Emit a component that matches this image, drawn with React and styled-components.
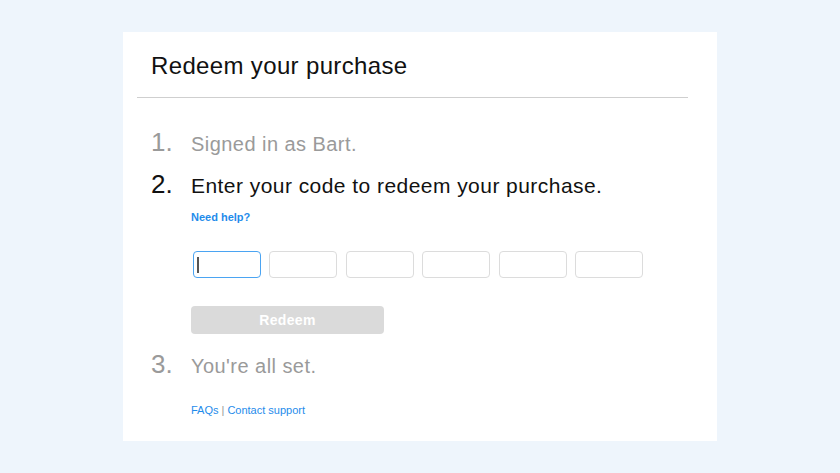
import React from 'react';
import styled, { createGlobalStyle } from 'styled-components';

const GlobalStyle = createGlobalStyle`
  html, body {
    margin: 0;
    padding: 0;
    background: #eef5fc;
  }
  body {
    font-family: "Liberation Sans", Arial, Helvetica, sans-serif;
  }
`;

const Page = styled.div`
  width: 840px;
  height: 473px;
  padding: 32px 0 0 123px;
  box-sizing: border-box;
`;

const Card = styled.div`
  width: 594px;
  height: 409px;
  background: #ffffff;
  padding: 22px 29px 0 14px;
  box-sizing: border-box;
  display: flex;
  flex-direction: column;
`;

const Title = styled.h1`
  margin: 0 0 19px 14px;
  font-size: 24px;
  line-height: 24px;
  font-weight: 400;
  letter-spacing: 0.35px;
  color: #111;
`;

const Divider = styled.hr`
  margin: 0;
  border: none;
  border-top: 1px solid #cfcfcf;
`;

const Steps = styled.div`
  display: flex;
  flex-direction: column;
  padding: 31px 0 0 14px;
`;

const Step = styled.div`
  display: flex;
  align-items: baseline;
  margin-top: ${({ gap }) => gap || 0}px;
  color: ${({ active }) => (active ? '#111' : '#9a9a9a')};
`;

const Num = styled.span`
  width: 40px;
  font-size: 26px;
  line-height: 1;
`;

const StepText = styled.span`
  font-size: ${({ large }) => (large ? 21 : 20)}px;
  letter-spacing: 0.45px;
  line-height: 1;
`;

const Body = styled.div`
  display: flex;
  flex-direction: column;
  align-items: flex-start;
  padding-left: 40px;
`;

const Link = styled.a`
  color: #1f8ceb;
  text-decoration: none;
  font-size: 11px;
  line-height: 11px;
  font-weight: ${({ bold }) => (bold ? 700 : 400)};
`;

const HelpLink = styled(Link)`
  margin-top: 15px;
`;

const CodeRow = styled.div`
  display: flex;
  gap: 8.4px;
  margin: 28px 0 0 2px;
`;

const CodeBox = styled.div`
  width: 68px;
  height: 27px;
  box-sizing: border-box;
  border: 1px solid ${({ focused }) => (focused ? '#4ba4f2' : '#dcdcdc')};
  border-radius: 4px;
  display: flex;
  align-items: center;
  padding-left: 3px;
`;

const Caret = styled.span`
  width: 2px;
  height: 16px;
  background: #555;
`;

const RedeemButton = styled.button`
  margin-top: 28px;
  width: 193px;
  height: 28px;
  border: none;
  border-radius: 4px;
  background: #dadada;
  color: #ffffff;
  font-family: "Liberation Sans", Arial, sans-serif;
  font-size: 14px;
  font-weight: 700;
  letter-spacing: 0.3px;
  padding: 0;
`;

const Footer = styled.div`
  margin: 28px 0 0 40px;
  font-size: 11px;
  line-height: 11px;
  color: #999;
`;

const Sep = styled.span`
  margin: 0 3px;
`;

export default function App() {
  return (
    <>
      <GlobalStyle />
      <Page>
        <Card>
          <Title>Redeem your purchase</Title>
          <Divider />
          <Steps>
            <Step>
              <Num>1.</Num>
              <StepText>Signed in as Bart.</StepText>
            </Step>
            <Step active gap={16}>
              <Num>2.</Num>
              <StepText large>Enter your code to redeem your purchase.</StepText>
            </Step>
            <Body>
              <HelpLink bold href="#">Need help?</HelpLink>
              <CodeRow>
                {[0, 1, 2, 3, 4, 5].map((i) => (
                  <CodeBox key={i} focused={i === 0}>
                    {i === 0 && <Caret />}
                  </CodeBox>
                ))}
              </CodeRow>
              <RedeemButton disabled>Redeem</RedeemButton>
            </Body>
            <Step gap={17}>
              <Num>3.</Num>
              <StepText>You're all set.</StepText>
            </Step>
            <Footer>
              <Link href="#">FAQs</Link>
              <Sep>|</Sep>
              <Link href="#">Contact support</Link>
            </Footer>
          </Steps>
        </Card>
      </Page>
    </>
  );
}
